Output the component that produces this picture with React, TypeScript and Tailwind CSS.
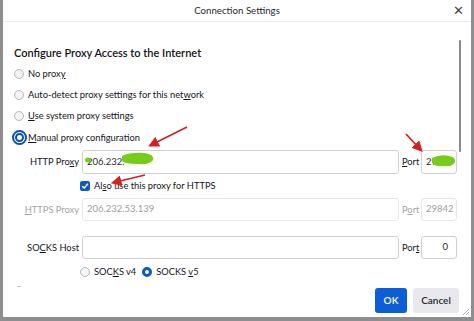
import React from "react";

const font = { fontFamily: 'Lato, "Noto Sans", sans-serif' };

function Radio({ checked, big, className = "" }: { checked?: boolean; big?: boolean; className?: string }) {
  if (big) {
    return (
      <span className={`w-[15px] h-[15px] rounded-full border-[2px] border-[#0a4fb4] flex items-center justify-center shrink-0 bg-white ${className}`}>
        <span className="w-[9px] h-[9px] rounded-full border-[2.5px] border-[#0a4fb4]" />
      </span>
    );
  }
  if (checked) {
    return <span className={`block w-[10px] h-[10px] rounded-full border-[3px] border-[#0a5bc4] shrink-0 bg-white ${className}`} />;
  }
  return <span className={`block w-[10px] h-[10px] rounded-full border border-[#b8b8bc] bg-[#f3f3f5] shrink-0 ${className}`} />;
}

function Field({ value, disabled, align = "left" }: { value?: string; disabled?: boolean; align?: "left" | "right" }) {
  return (
    <div
      className={`h-full w-full rounded-[3px] border ${disabled ? "border-[#e6e6e8] text-[#9d9da3]" : "border-[#cfcfd4] text-[#2a2a2e]"} bg-white flex items-center px-[4px] text-[9.5px] whitespace-nowrap overflow-hidden ${align === "right" ? "justify-end pr-[8px]" : ""}`}
    >
      {value}
    </div>
  );
}

export default function App() {
  return (
    <div className="w-[474px] h-[321px] bg-[#8e8e90] flex flex-col px-[3px] pb-[4px] overflow-hidden text-[#15141a]" style={font}>
      <div className="flex-1 bg-white flex flex-col relative overflow-hidden">
        {/* title bar */}
        <div className="h-[22px] border-b border-[#ececee] flex items-center justify-center relative shrink-0">
          <span className="text-[9.7px] text-[#2a2a2e]">Connection Settings</span>
          <span className="absolute right-[7px] top-[4px] text-[#444] text-[13px] leading-none">✕</span>
        </div>

        {/* scroll area */}
        <div className="h-[267px] overflow-hidden pl-[11px] pr-[14px] pt-[22px] text-[9.3px] relative whitespace-nowrap">
          <div className="text-[11px] font-semibold leading-[17px] mb-[2px] text-[#15141a]">Configure Proxy Access to the Internet</div>

          <div className="flex flex-col">
            <div className="h-[21px] flex items-center gap-[4px]">
              <Radio />
              <span>No prox<u>y</u></span>
            </div>
            <div className="h-[21px] flex items-center gap-[4px]">
              <Radio />
              <span>Auto-detect proxy settings for this net<u>w</u>ork</span>
            </div>
            <div className="h-[22px] flex items-center gap-[4px]">
              <Radio />
              <span><u>U</u>se system proxy settings</span>
            </div>
            <div className="h-[21px] flex items-center gap-[1px] -ml-[2px]">
              <Radio big />
              <span><u>M</u>anual proxy configuration</span>
            </div>
          </div>

          {/* HTTP row */}
          <div className="h-[24px] mt-[2px] flex items-center">
            <span className="w-[68px] text-right pr-[3px]">HTTP Pro<u>x</u>y</span>
            <div className="flex-1 h-full">
              <Field value="206.232." />
            </div>
            <span className="w-[22px] pl-[3px]"><u>P</u>ort</span>
            <div className="w-[36px] h-full">
              <Field value="29" />
            </div>
          </div>

          <div className="h-[23px] flex items-center gap-[4px] pl-[66px]">
            <span className="w-[10px] h-[10px] rounded-[2px] bg-[#0a5bc4] flex items-center justify-center">
              <svg width="8" height="8" viewBox="0 0 8 8">
                <path d="M1.2 4.2 L3.2 6.1 L6.9 1.8" stroke="white" strokeWidth="1.4" fill="none" />
              </svg>
            </span>
            <span>Al<u>s</u>o use this proxy for HTTPS</span>
          </div>

          {/* HTTPS row */}
          <div className="h-[23px] mt-[1px] flex items-center text-[#a3a3a8]">
            <span className="w-[68px] text-right pr-[3px]"><u>H</u>TTPS Proxy</span>
            <div className="flex-1 h-full">
              <Field value="206.232.53.139" disabled />
            </div>
            <span className="w-[22px] pl-[3px]">P<u>o</u>rt</span>
            <div className="w-[36px] h-full">
              <Field value="29842" disabled />
            </div>
          </div>

          {/* SOCKS row */}
          <div className="h-[23px] mt-[15px] flex items-center">
            <span className="w-[68px] text-right pr-[3px]">SO<u>C</u>KS Host</span>
            <div className="flex-1 h-full">
              <Field />
            </div>
            <span className="w-[22px] pl-[3px]">Por<u>t</u></span>
            <div className="w-[36px] h-full">
              <Field value="0" align="right" />
            </div>
          </div>

          <div className="h-[25px] flex items-center pl-[66px]">
            <Radio />
            <span className="ml-[4px]">SOC<u>K</u>S v4</span>
            <Radio checked className="ml-[6px]" />
            <span className="ml-[4px]">SOCKS <u>v</u>5</span>
          </div>

          <div className="h-[20px] flex items-start pt-[2px]">
            <Radio />
          </div>

          {/* scrollbar */}
          <div className="absolute right-[10px] top-[18px] w-[2px] h-[112px] bg-[#8a8a8e] rounded-full" />
        </div>

        {/* button bar */}
        <div className="absolute left-0 right-0 bottom-0 h-[30px] bg-white flex justify-end items-start gap-[6px] pr-[12px] pt-[1px]">
          <div className="w-[32px] h-[25px] rounded-[3px] bg-[#0b5ed7] text-white text-[10px] font-semibold flex items-center justify-center">OK</div>
          <div className="w-[46px] h-[25px] rounded-[3px] bg-[#e9e9ed] text-[#2a2a2e] text-[10px] font-semibold flex items-center justify-center">Cancel</div>
        </div>
        <svg className="absolute right-[1px] bottom-[1px]" width="8" height="8" viewBox="0 0 8 8">
          <path d="M7 1 L1 7 M7 4 L4 7 M7 6.5 L6.5 7" stroke="#9a9a9a" strokeWidth="0.8" />
        </svg>
      </div>

      {/* annotations: red arrows and green scribbles */}
      <svg className="absolute left-0 top-0 pointer-events-none" width="474" height="321" viewBox="0 0 474 321">
        <defs>
          <marker id="ah" markerWidth="6" markerHeight="6" refX="3" refY="3" orient="auto">
            <path d="M0 0 L6 3 L0 6 z" fill="#d42020" />
          </marker>
        </defs>
        <line x1="187" y1="127" x2="153" y2="144" stroke="#d42020" strokeWidth="1.8" markerEnd="url(#ah)" />
        <line x1="145" y1="175" x2="116" y2="182" stroke="#d42020" strokeWidth="1.8" markerEnd="url(#ah)" />
        <line x1="406" y1="134" x2="419" y2="148" stroke="#d42020" strokeWidth="1.8" markerEnd="url(#ah)" />
        <ellipse cx="88" cy="160" rx="3" ry="2.5" fill="#77cc1a" />
        <path d="M122 156 Q130 152 145 153 Q155 155 153 160 Q150 165 138 164 Q125 164 122 161 Z" fill="#77cc1a" />
        <path d="M432 158 Q440 154 449 156 Q456 157 455 162 Q453 167 444 166 Q436 167 432 163 Z" fill="#77cc1a" />
      </svg>
    </div>
  );
}
